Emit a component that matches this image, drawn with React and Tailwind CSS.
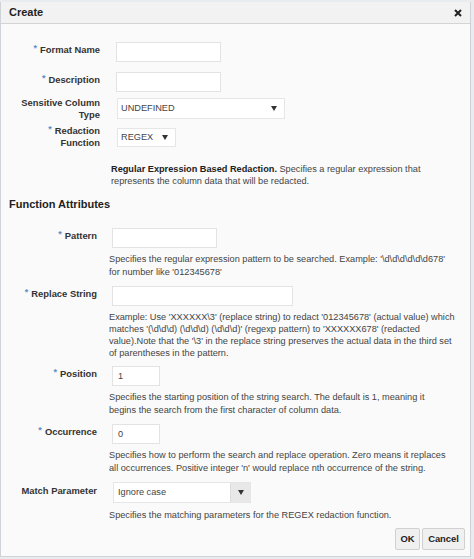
import React from 'react';

const Req = () => (
  <span className="text-[#5b8ec9] text-[9px] align-top relative top-[-2px] mr-[3px]">*</span>
);

const Arrow = () => (
  <svg width="6" height="5" viewBox="0 0 6 5">
    <path d="M0 0 L6 0 L3 5 Z" fill="#333" />
  </svg>
);

const Desc = ({ lines, leading = 'leading-[13px]', className = '' }) => (
  <div className={`ml-[108px] text-[9.2px] text-[#444] whitespace-nowrap ${leading} ${className}`}>
    {lines.map((l, i) => (
      <div key={i}>{l}</div>
    ))}
  </div>
);

const AttrRow = ({ label, req, className = '', children }) => (
  <div className={`flex items-start ${className}`}>
    <div className="w-[96px] shrink-0 text-right font-bold text-[9.4px] leading-[14px] pt-[1px] text-[#333]">
      {req && <Req />}
      {label}
    </div>
    <div className="ml-[15px]">{children}</div>
  </div>
);

export default function App() {
  return (
    <div
      className="w-[474px] h-[559px] bg-[#e9ecef] overflow-hidden"
      style={{ fontFamily: '"Liberation Sans", Arial, sans-serif' }}
    >
      <div className="mt-[2px] w-[471px] h-[555px] bg-[#fafafa] border-l border-r border-b border-[#cfd2d6] flex flex-col">
        {/* header */}
        <div className="h-[22px] bg-[#f2f2f2] border-b border-[#d4d4d4] flex items-center justify-between pl-[8px] pr-[8px]">
          <span className="font-bold text-[11px] text-[#222]">Create</span>
          <svg width="8" height="8" viewBox="0 0 8 8">
            <path d="M1 1 L7 7 M7 1 L1 7" stroke="#222" strokeWidth="2" />
          </svg>
        </div>

        {/* top fields */}
        <div className="flex items-start mt-[18px]">
          <div className="w-[99px] shrink-0 text-right font-bold text-[9.4px] leading-[14px] pt-[1px] text-[#333]">
            <Req />Format Name
          </div>
          <div className="ml-[16px] w-[105px] h-[20px] bg-white border border-[#e3e3e3]" />
        </div>
        <div className="flex items-start mt-[10px]">
          <div className="w-[99px] shrink-0 text-right font-bold text-[9.4px] leading-[14px] pt-[1px] text-[#333]">
            <Req />Description
          </div>
          <div className="ml-[16px] w-[105px] h-[20px] bg-white border border-[#e3e3e3]" />
        </div>
        <div className="flex items-start mt-[5px]">
          <div className="w-[99px] shrink-0 text-right font-bold text-[9.4px] leading-[12px] text-[#333]">
            Sensitive Column
            <br />
            Type
          </div>
          <div className="ml-[17px] mt-[1px] w-[168px] h-[21px] bg-white border border-[#e6e6e6] flex items-center justify-between pl-[3px] pr-[7px] text-[9.2px] text-[#444]">
            <span>UNDEFINED</span>
            <Arrow />
          </div>
        </div>
        <div className="flex items-start mt-[4px]">
          <div className="w-[99px] shrink-0 text-right font-bold text-[9.4px] leading-[12px] text-[#333]">
            <Req />Redaction
            <br />
            Function
          </div>
          <div className="ml-[17px] mt-[3px] w-[59px] h-[19px] bg-white border border-[#e6e6e6] flex items-center justify-between pl-[3px] pr-[7px] text-[9.2px] text-[#444]">
            <span>REGEX</span>
            <Arrow />
          </div>
        </div>
        <div className="ml-[110px] mt-[14px] text-[9.2px] leading-[12px] text-[#444] whitespace-nowrap">
          <div>
            <span className="font-bold text-[#222]">Regular Expression Based Redaction.</span> Specifies a regular expression that
          </div>
          <div>represents the column data that will be redacted.</div>
        </div>

        {/* function attributes */}
        <div className="mt-[10px] pl-[8px] font-bold text-[11px] leading-[14px] text-[#222]">Function Attributes</div>

        <AttrRow label="Pattern" req className="mt-[17px]">
          <div className="w-[105px] h-[20px] bg-white border border-[#e3e3e3]" />
        </AttrRow>
        <Desc
          className="mt-[5px]"
          lines={[
            "Specifies the regular expression pattern to be searched. Example: '\\d\\d\\d\\d\\d\\d678'",
            "for number like '012345678'",
          ]}
        />

        <AttrRow label="Replace String" req className="mt-[7px]">
          <div className="w-[181px] h-[20px] bg-white border border-[#e3e3e3]" />
        </AttrRow>
        <Desc
          className="mt-[5px]"
          leading="leading-[12px]"
          lines={[
            "Example: Use 'XXXXXX\\3' (replace string) to redact '012345678' (actual value) which",
            "matches '(\\d\\d\\d) (\\d\\d\\d) (\\d\\d\\d)' (regexp pattern) to 'XXXXXX678' (redacted",
            "value).Note that the '\\3' in the replace string preserves the actual data in the third set",
            'of parentheses in the pattern.',
          ]}
        />

        <AttrRow label="Position" req className="mt-[7px]">
          <div className="w-[48px] h-[20px] bg-white border border-[#e3e3e3] pl-[5px] text-[9.2px] leading-[18px] text-[#444]">1</div>
        </AttrRow>
        <Desc
          className="mt-[5px]"
          lines={[
            'Specifies the starting position of the string search. The default is 1, meaning it',
            'begins the search from the first character of column data.',
          ]}
        />

        <AttrRow label="Occurrence" req className="mt-[7px]">
          <div className="w-[48px] h-[20px] bg-white border border-[#e3e3e3] pl-[5px] text-[9.2px] leading-[18px] text-[#444]">0</div>
        </AttrRow>
        <Desc
          className="mt-[5px]"
          lines={[
            'Specifies how to perform the search and replace operation. Zero means it replaces',
            "all occurrences. Positive integer 'n' would replace nth occurrence of the string.",
          ]}
        />

        <div className="flex items-start mt-[7px]">
          <div className="w-[96px] shrink-0 text-right font-bold text-[9.4px] leading-[14px] pt-[2px] text-[#333]">
            Match Parameter
          </div>
          <div className="ml-[16px] w-[138px] h-[21px] bg-white border border-[#e6e6e6] flex text-[9.2px] text-[#444]">
            <div className="flex-1 flex items-center pl-[4px]">Ignore case</div>
            <div className="w-[20px] bg-[#e8e8e8] border-l border-[#dcdcdc] flex items-center justify-center">
              <Arrow />
            </div>
          </div>
        </div>
        <Desc className="mt-[6px]" lines={['Specifies the matching parameters for the REGEX redaction function.']} />

        <div className="mt-[6px] flex justify-end gap-[2px] pr-[5px]">
          <button className="h-[22px] w-[25px] bg-[#f0f0f0] border border-[#d0d0d0] rounded-[2px] font-bold text-[9.4px] text-[#222]">
            OK
          </button>
          <button className="h-[22px] w-[43px] bg-[#f0f0f0] border border-[#d0d0d0] rounded-[2px] font-bold text-[9.4px] text-[#222]">
            Cancel
          </button>
        </div>
      </div>
    </div>
  );
}
